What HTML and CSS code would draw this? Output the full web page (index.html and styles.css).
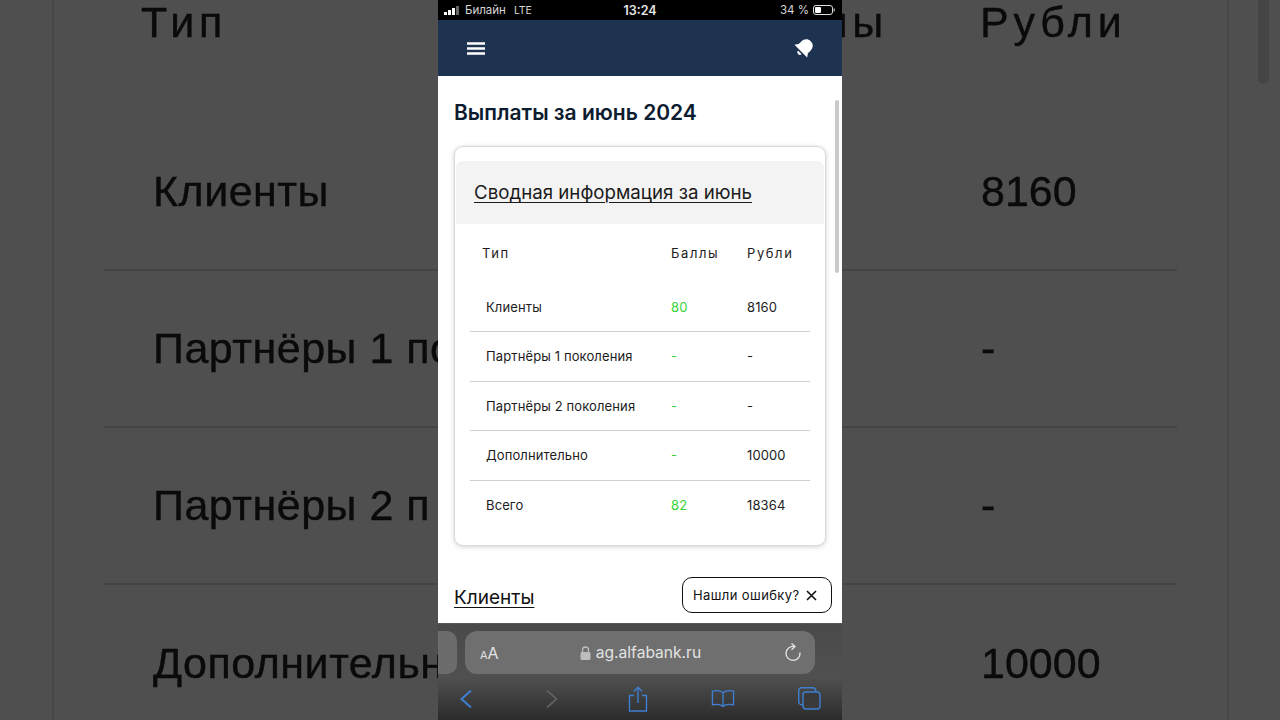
FILE: index.html
```html
<!DOCTYPE html>
<html lang="ru">
<head>
  <meta charset="UTF-8" />
  <title>Выплаты за июнь 2024</title>
  <link rel="stylesheet" href="styles.css">
</head>
<body>
  <!-- blurred, enlarged copy of the page behind the phone, words cut where the phone covers them -->
  <div class="backdrop" aria-hidden="true">
    <div class="backdrop-scroll"></div>
    <div class="backdrop-frame">
      <div class="backdrop-head"><span>Тип</span><span class="backdrop-mid">лы</span><span>Рубли</span></div>
      <div class="backdrop-row"><span class="backdrop-label">Клиенты</span><span>8160</span></div>
      <div class="backdrop-row"><span class="backdrop-label">Партнёры 1 по</span><span>-</span></div>
      <div class="backdrop-row"><span class="backdrop-label">Партнёры 2 п</span><span>-</span></div>
      <div class="backdrop-row backdrop-row-last"><span class="backdrop-label">Дополнительн</span><span>10000</span></div>
    </div>
  </div>

  <div class="phone">
    <div class="status-bar">
      <div class="status-left">
        <svg class="signal" width="16" height="9" viewBox="0 0 16 9"><rect x="0" y="6" width="3" height="3" fill="#fff"/><rect x="4" y="4" width="3" height="5" fill="#fff"/><rect x="8" y="2" width="3" height="7" fill="#fff"/><rect x="12" y="0" width="3" height="9" fill="#666"/></svg>
        <span>Билайн</span>
        <span class="lte">LTE</span>
      </div>
      <div class="status-time">13:24</div>
      <div class="status-right">
        <span>34 %</span>
        <svg width="23" height="10" viewBox="0 0 23 10"><rect x="0.5" y="0.5" width="19" height="9" rx="2.5" fill="none" stroke="#ddd"/><rect x="2" y="2" width="6" height="6" rx="1" fill="#fff"/><rect x="20.5" y="3.5" width="1.5" height="3" fill="#999"/></svg>
      </div>
    </div>

    <header class="topbar">
      <svg width="18" height="13" viewBox="0 0 18 13"><path d="M0 1.500h18M0 6.500h18M0 11.500h18" stroke="#fff" stroke-width="2.500"/></svg>
      <svg width="24" height="24" viewBox="0 0 24 24"><g transform="rotate(45 12 12)" fill="#fff"><path d="M12 2.500c-4.200 0-6.500 3-6.500 6.800v3.700l-2.500 3.500h18l-2.500-3.500v-3.700c0-3.800-2.300-6.800-6.500-6.800z"/><path d="M9.500 18h5a2.500 2.500 0 0 1-5 0z"/></g></svg>
    </header>

    <main class="content">
      <div class="page-scroll"></div>
      <h1>Выплаты за июнь 2024</h1>
      <section class="card">
        <h2 class="card-title"><span>Сводная информация за июнь</span></h2>
        <table class="summary">
          <thead>
            <tr><th class="col-type">Тип</th><th class="col-points">Баллы</th><th class="col-rub">Рубли</th></tr>
          </thead>
          <tbody>
            <tr><td>Клиенты</td><td class="points">80</td><td>8160</td></tr>
            <tr><td>Партнёры 1 поколения</td><td class="points">-</td><td>-</td></tr>
            <tr><td>Партнёры 2 поколения</td><td class="points">-</td><td>-</td></tr>
            <tr><td>Дополнительно</td><td class="points">-</td><td>10000</td></tr>
            <tr><td>Всего</td><td class="points">82</td><td>18364</td></tr>
          </tbody>
        </table>
      </section>
      <h2 class="section-title">Клиенты</h2>
      <div class="report-btn">
        <span>Нашли ошибку?</span>
        <svg width="11" height="11" viewBox="0 0 11 11"><path d="M1 1l9 9M10 1l-9 9" stroke="#111" stroke-width="1.600"/></svg>
      </div>
    </main>

    <footer class="safari">
      <div class="url-row">
        <div class="tab-stub"></div>
        <div class="url-bar">
          <span class="aa"><small>A</small>A</span>
          <span class="address">
            <svg width="11" height="14" viewBox="0 0 11 14"><rect x="0.500" y="6" width="10" height="8" rx="1.500" fill="#bdbdbd"/><path d="M2.500 6.500V4a3 3 0 0 1 6 0v2.500" fill="none" stroke="#bdbdbd" stroke-width="1.300"/></svg>
            ag.alfabank.ru
          </span>
          <svg width="18" height="20" viewBox="0 0 18 20"><path d="M10 3.500A7 7 0 1 0 16 10" fill="none" stroke="#e6e6e6" stroke-width="1.300" stroke-linecap="round"/><path d="M7.500 0.500L11 3.500L7.500 6.800" fill="none" stroke="#e6e6e6" stroke-width="1.300"/></svg>
        </div>
      </div>
      <div class="tool-row">
        <span class="tool"><svg width="14" height="20" viewBox="0 0 14 20"><path d="M12 1.500L2.500 10L12 18.500" fill="none" stroke="#3f7fd0" stroke-width="2"/></svg></span>
        <span class="tool"><svg width="14" height="20" viewBox="0 0 14 20"><path d="M2 1.500L11.500 10L2 18.500" fill="none" stroke="#5f5f5f" stroke-width="1.800"/></svg></span>
        <span class="tool"><svg width="20" height="26" viewBox="0 0 20 26"><path d="M6 9.500H1.500V25h17V9.500H14M10 17V1.500M5.800 5.500L10 1.200l4.200 4.300" fill="none" stroke="#3f7fd0" stroke-width="1.400"/></svg></span>
        <span class="tool"><svg width="25" height="19" viewBox="0 0 25 19"><path d="M12.500 3.500C10.500 1.500 6 1 1.500 1.800V16c4.500-.8 9-.3 11 1.800 2-2.100 6.500-2.600 11-1.800V1.800C19 1 14.500 1.500 12.500 3.500zM12.500 3.500V17.800" fill="none" stroke="#3f7fd0" stroke-width="1.400"/></svg></span>
        <span class="tool"><svg width="23" height="23" viewBox="0 0 23 23"><rect x="0.700" y="0.700" width="17" height="17" rx="3" fill="none" stroke="#3f7fd0" stroke-width="1.400"/><rect x="5" y="5" width="17" height="17" rx="3" fill="#3a3a3a" stroke="#3f7fd0" stroke-width="1.400"/></svg></span>
      </div>
    </footer>
  </div>
</body>
</html>
```

FILE: styles.css
```css
* {
  box-sizing: border-box;
}
html, body {
  margin: 0;
  padding: 0;
  height: 720px;
  overflow: hidden;
}
body {
  position: relative;
  background: #4f4f4f;
  font-family: 'Inter', 'Liberation Sans', sans-serif;
  color: #111;
}

/* backdrop */
.backdrop {
  position: absolute;
  top: 0;
  left: 0;
  width: 1280px;
  height: 720px;
  overflow: hidden;
  padding-left: 52px;
  color: #0a0a0a;
  font-family: 'Liberation Sans', sans-serif;
  font-size: 43px;
  -webkit-text-stroke: 0.4px #0a0a0a;
  filter: blur(0.5px);
}
.backdrop-frame {
  width: 1177px;
  height: 720px;
  border-left: 2px solid #474747;
  border-right: 2px solid #474747;
  padding: 0 50px;
}
.backdrop-scroll {
  position: absolute;
  top: 0;
  right: 11px;
  width: 11px;
  height: 84px;
  background: #454545;
  border-radius: 0 0 6px 6px;
}
.backdrop-head {
  display: flex;
  height: 113px;
  padding-left: 37px;
  line-height: 44px;
  letter-spacing: 4.800px;
}
.backdrop-head span:first-child {
  width: 490px;
}
.backdrop-mid {
  width: 349px;
  text-align: right;
  padding-right: 92px;
}
.backdrop-row {
  display: grid;
  grid-template-columns: 828px 1fr;
  align-items: center;
  height: 157px;
  padding-left: 49px;
  border-bottom: 2px solid #444;
  white-space: nowrap;
}
.backdrop-row:nth-child(2) {
  height: 158px;
}
.backdrop-row-last {
  border-bottom: none;
}
.backdrop-label {
  letter-spacing: 0.500px;
}

/* phone */
.phone {
  position: relative;
  width: 404px;
  height: 720px;
  margin: 0 auto;
  display: flex;
  flex-direction: column;
  background: #fff;
}
.status-bar {
  height: 20px;
  background: #000;
  color: #d8d8d8;
  display: grid;
  grid-template-columns: 1fr auto 1fr;
  align-items: center;
  padding: 0 6px;
  font-size: 11.500px;
}
.status-left {
  display: flex;
  align-items: center;
  gap: 5px;
}
.lte {
  margin-left: 3px;
  font-size: 10.500px;
}
.status-time {
  font-size: 12.500px;
  font-weight: 600;
  color: #e6e6e6;
}
.status-right {
  display: flex;
  justify-content: flex-end;
  align-items: center;
  gap: 4px;
}
.topbar {
  height: 56px;
  background: #1e334f;
  display: flex;
  align-items: center;
  justify-content: space-between;
  padding: 0 26px 0 29px;
}

/* content */
.content {
  position: relative;
  flex: 1;
  min-height: 0;
  overflow: hidden;
  padding: 0 16px;
}
.page-scroll {
  position: absolute;
  top: 24px;
  left: 397px;
  width: 4px;
  height: 173px;
  background: #c9c9c9;
  border-radius: 2px;
}
h1 {
  margin: 0;
  padding-top: 24px;
  height: 70px;
  font-size: 21px;
  line-height: 26px;
  font-weight: 600;
  color: #0e1c30;
}
.card {
  width: 372px;
  height: 400px;
  padding-top: 14px;
  border: 1px solid #d9d9d9;
  border-radius: 9px;
  box-shadow: 0 1px 5px rgba(0,0,0,0.18);
  background: #fff;
}
.card-title {
  margin: 0 1px;
  height: 63px;
  padding-left: 18px;
  background: #f3f3f3;
  border-radius: 6px 6px 0 0;
  font-size: 18.700px;
  font-weight: 400;
  line-height: 64px;
  color: #1a1a1a;
}
.card-title span, .section-title {
  text-decoration: underline;
  text-underline-offset: 3px;
  text-decoration-thickness: 1px;
}
.summary {
  width: 340px;
  margin: 0 0 0 15px;
  border-collapse: collapse;
  table-layout: fixed;
  font-size: 13px;
  letter-spacing: 0.120px;
  color: #1c1c1c;
}
.summary th {
  height: 58px;
  padding: 0;
  text-align: left;
  font-weight: 400;
  letter-spacing: 1.600px;
  vertical-align: middle;
}
.col-type {
  width: 201px;
  padding-left: 12px !important;
}
.col-points {
  width: 76px;
}
.summary td {
  height: 49.500px;
  padding: 0;
  border-bottom: 1px solid #cfcfcf;
}
.summary td:first-child {
  padding-left: 16px;
}
.summary tr:last-child td {
  border-bottom: none;
}
.points {
  color: #38d438;
}
.section-title {
  margin: 0;
  padding-top: 39px;
  font-size: 19px;
  font-weight: 400;
  line-height: 26px;
  color: #111;
}
.report-btn {
  position: absolute;
  left: 244px;
  top: 501px;
  width: 150px;
  height: 36px;
  display: flex;
  align-items: center;
  justify-content: space-between;
  padding: 0 14px 0 10px;
  border: 1px solid #111;
  border-radius: 10px;
  background: #fff;
  font-size: 13px;
  letter-spacing: 0.400px;
}

/* safari toolbar */
.safari {
  height: 97px;
  background: linear-gradient(#4a4a4a, #505050 55%, #2b2b2b);
  border-top: 1px solid #5a5a5a;
}
.url-row {
  display: flex;
  gap: 8px;
  padding-top: 7px;
}
.tab-stub {
  width: 19px;
  height: 43px;
  background: #6c6c6c;
  border-radius: 0 10px 10px 0;
}
.url-bar {
  width: 350px;
  height: 43px;
  background: #6f6f6f;
  border-radius: 12px;
  display: flex;
  align-items: center;
  justify-content: space-between;
  padding: 0 13px 0 15px;
  color: #e2e2e2;
}
.aa {
  font-size: 16px;
  width: 17px;
}
.aa small {
  font-size: 11px;
}
.address {
  display: flex;
  align-items: center;
  gap: 5px;
  font-size: 15.600px;
}
.tool-row {
  display: flex;
  align-items: center;
  justify-content: space-between;
  height: 46px;
  padding: 3px 21px 0 16px;
}
.tool {
  width: 24px;
  display: flex;
  justify-content: center;
}
```
